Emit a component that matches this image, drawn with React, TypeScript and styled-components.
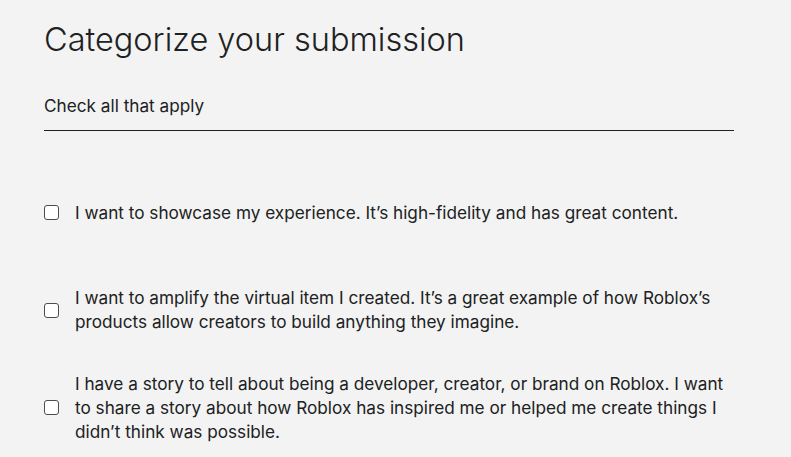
import styled, { createGlobalStyle } from "styled-components";

const GlobalStyle = createGlobalStyle`
  html, body {
    margin: 0;
    padding: 0;
    background: #f2f3f2;
  }
  body {
    font-family: Inter, "Noto Sans", sans-serif;
    color: #202122;
  }
`;

const Page = styled.main`
  width: 690px;
  padding: 18px 0 0 44px;
`;

const Title = styled.h1`
  margin: 0;
  font-size: 32.5px;
  font-weight: 300;
  line-height: 44px;
`;

const Hint = styled.div`
  margin-top: 33px;
  padding-bottom: 13px;
  font-size: 17.2px;
  line-height: 22px;
  border-bottom: 1px solid #202122;
`;

const OptionList = styled.ul`
  list-style: none;
  margin: 33px 0 0;
  padding: 0;
  display: flex;
  flex-direction: column;
`;

const Option = styled.li`
  display: flex;
  align-items: center;
  gap: 16px;
  height: 97.5px;
`;

const Box = styled.input.attrs({ type: "checkbox" })`
  appearance: none;
  flex: none;
  width: 15px;
  height: 15px;
  margin: 0;
  border: 1.5px solid #4d4e50;
  border-radius: 3px;
  background: #fff;
`;

const Label = styled.label`
  font-size: 17.2px;
  line-height: 24px;
`;

const options = [
  "I want to showcase my experience. It’s high-fidelity and has great content.",
  "I want to amplify the virtual item I created. It’s a great example of how Roblox’s products allow creators to build anything they imagine.",
  "I have a story to tell about being a developer, creator, or brand on Roblox. I want to share a story about how Roblox has inspired me or helped me create things I didn’t think was possible.",
];

const App = () => {
  return (
    <>
      <GlobalStyle />
      <Page>
        <Title>Categorize your submission</Title>
        <Hint>Check all that apply</Hint>
        <OptionList>
          {options.map((text, i) => (
            <Option key={i}>
              <Box id={`opt-${i}`} />
              <Label htmlFor={`opt-${i}`}>{text}</Label>
            </Option>
          ))}
        </OptionList>
      </Page>
    </>
  );
};

export default App;
